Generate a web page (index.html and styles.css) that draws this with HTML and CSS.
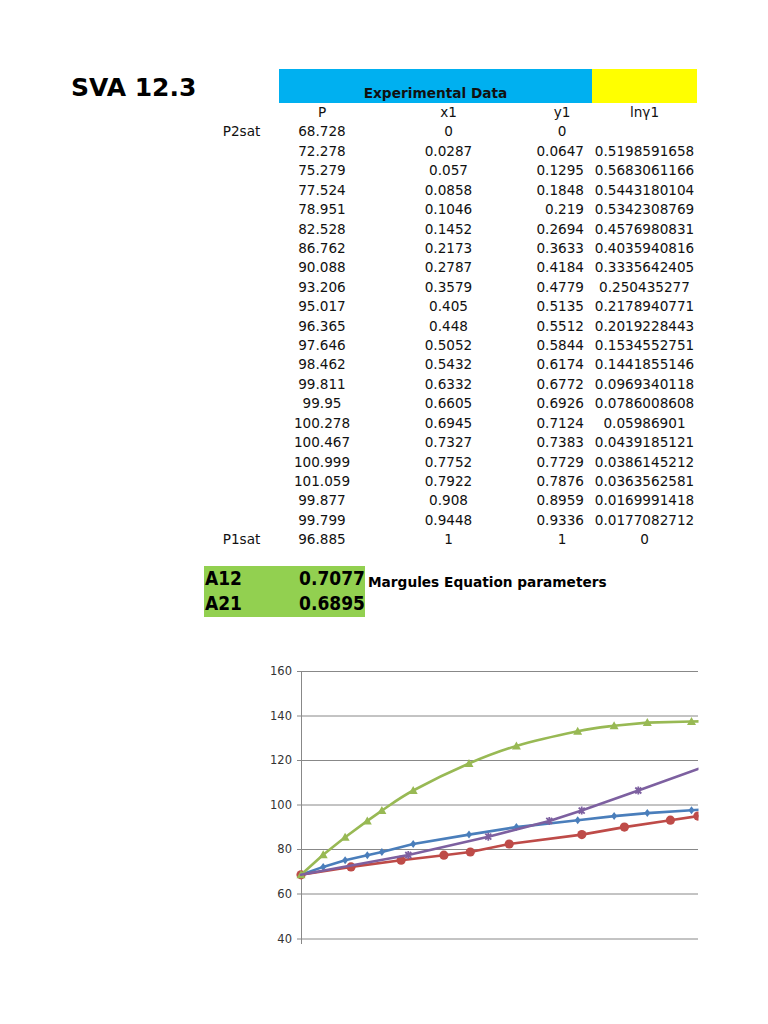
FILE: index.html
```html
<!DOCTYPE html>
<html>
<head>
<meta charset="utf-8">
<link rel="stylesheet" href="styles.css">
</head>
<body>
<div class="title-row">
  <div class="title">SVA 12.3</div>
  <div class="exp">Experimental Data</div>
  <div class="yel"></div>
</div>

<div class="table">
  <div class="row head"><span></span><span class="c">P</span><span class="c">x1</span><span class="c">y1</span><span class="c">lnγ1</span></div>
  <div class="row"><span class="c">P2sat</span><span class="c">68.728</span><span class="c">0</span><span class="c">0</span><span class="c"></span></div>
  <div class="row"><span></span><span class="c">72.278</span><span class="c">0.0287</span><span class="r">0.0647</span><span class="c">0.5198591658</span></div>
  <div class="row"><span></span><span class="c">75.279</span><span class="c">0.057</span><span class="r">0.1295</span><span class="c">0.5683061166</span></div>
  <div class="row"><span></span><span class="c">77.524</span><span class="c">0.0858</span><span class="r">0.1848</span><span class="c">0.5443180104</span></div>
  <div class="row"><span></span><span class="c">78.951</span><span class="c">0.1046</span><span class="r">0.219</span><span class="c">0.5342308769</span></div>
  <div class="row"><span></span><span class="c">82.528</span><span class="c">0.1452</span><span class="r">0.2694</span><span class="c">0.4576980831</span></div>
  <div class="row"><span></span><span class="c">86.762</span><span class="c">0.2173</span><span class="r">0.3633</span><span class="c">0.4035940816</span></div>
  <div class="row"><span></span><span class="c">90.088</span><span class="c">0.2787</span><span class="r">0.4184</span><span class="c">0.3335642405</span></div>
  <div class="row"><span></span><span class="c">93.206</span><span class="c">0.3579</span><span class="r">0.4779</span><span class="c">0.250435277</span></div>
  <div class="row"><span></span><span class="c">95.017</span><span class="c">0.405</span><span class="r">0.5135</span><span class="c">0.2178940771</span></div>
  <div class="row"><span></span><span class="c">96.365</span><span class="c">0.448</span><span class="r">0.5512</span><span class="c">0.2019228443</span></div>
  <div class="row"><span></span><span class="c">97.646</span><span class="c">0.5052</span><span class="r">0.5844</span><span class="c">0.1534552751</span></div>
  <div class="row"><span></span><span class="c">98.462</span><span class="c">0.5432</span><span class="r">0.6174</span><span class="c">0.1441855146</span></div>
  <div class="row"><span></span><span class="c">99.811</span><span class="c">0.6332</span><span class="r">0.6772</span><span class="c">0.0969340118</span></div>
  <div class="row"><span></span><span class="c">99.95</span><span class="c">0.6605</span><span class="r">0.6926</span><span class="c">0.0786008608</span></div>
  <div class="row"><span></span><span class="c">100.278</span><span class="c">0.6945</span><span class="r">0.7124</span><span class="c">0.05986901</span></div>
  <div class="row"><span></span><span class="c">100.467</span><span class="c">0.7327</span><span class="r">0.7383</span><span class="c">0.0439185121</span></div>
  <div class="row"><span></span><span class="c">100.999</span><span class="c">0.7752</span><span class="r">0.7729</span><span class="c">0.0386145212</span></div>
  <div class="row"><span></span><span class="c">101.059</span><span class="c">0.7922</span><span class="r">0.7876</span><span class="c">0.0363562581</span></div>
  <div class="row"><span></span><span class="c">99.877</span><span class="c">0.908</span><span class="r">0.8959</span><span class="c">0.0169991418</span></div>
  <div class="row"><span></span><span class="c">99.799</span><span class="c">0.9448</span><span class="r">0.9336</span><span class="c">0.0177082712</span></div>
  <div class="row"><span class="c">P1sat</span><span class="c">96.885</span><span class="c">1</span><span class="c">1</span><span class="c">0</span></div>
</div>

<div class="params">
  <div class="prow">
    <span class="pname">A12</span><span class="pval">0.7077</span><span class="pnote">Margules Equation parameters</span>
  </div>
  <div class="prow">
    <span class="pname">A21</span><span class="pval">0.6895</span><span></span>
  </div>
</div>

<svg class="chart" width="768" height="300" viewBox="0 655 768 300" xmlns="http://www.w3.org/2000/svg">
  <defs>
    <clipPath id="plot"><rect x="290" y="660" width="408.5" height="290"/></clipPath>
    <marker id="mBlue" markerUnits="userSpaceOnUse" markerWidth="10" markerHeight="10" refX="5" refY="5" overflow="visible">
      <path d="M5 1 L8 5 L5 9 L2 5 Z" fill="#4a7ebb"/>
    </marker>
    <marker id="mRed" markerUnits="userSpaceOnUse" markerWidth="12" markerHeight="12" refX="6" refY="6" overflow="visible">
      <circle cx="6" cy="6" r="4.6" fill="#be4b48"/>
    </marker>
    <marker id="mGreen" markerUnits="userSpaceOnUse" markerWidth="12" markerHeight="12" refX="6" refY="6" overflow="visible">
      <path d="M6 1.5 L10.5 9.5 L1.5 9.5 Z" fill="#98b954"/>
    </marker>
    <marker id="mPurple" markerUnits="userSpaceOnUse" markerWidth="12" markerHeight="12" refX="6" refY="6" overflow="visible">
      <path d="M3 3 L9 9 M9 3 L3 9 M6 2 L6 10" stroke="#7d60a0" stroke-width="1.8"/>
    </marker>
  </defs>

  <g class="grid">
    <line x1="297" y1="671.5" x2="698" y2="671.5"/>
    <line x1="297" y1="716" x2="698" y2="716"/>
    <line x1="297" y1="760.5" x2="698" y2="760.5"/>
    <line x1="297" y1="805" x2="698" y2="805"/>
    <line x1="297" y1="849.5" x2="698" y2="849.5"/>
    <line x1="297" y1="894" x2="698" y2="894"/>
    <line x1="297" y1="939" x2="698" y2="939"/>
    <line x1="301.5" y1="671" x2="301.5" y2="944"/>
  </g>

  <g class="ylabels">
    <text x="292" y="671">160</text>
    <text x="292" y="716">140</text>
    <text x="292" y="760">120</text>
    <text x="292" y="805">100</text>
    <text x="292" y="849">80</text>
    <text x="292" y="894">60</text>
    <text x="292" y="939">40</text>
  </g>

  <g clip-path="url(#plot)" fill="none" stroke-width="2.6" stroke-linejoin="round" stroke-linecap="round">
    <path stroke="#4a7ebb" marker-start="url(#mBlue)" marker-mid="url(#mBlue)" marker-end="url(#mBlue)"
      d="M301 874.8 L323.2 866.9 L345.1 860.2 L367.3 855.2 L381.9 852 L413.2 844 L469 834.6 L516.4 827.1 L577.7 820.2 L614.1 816.1 L647.3 813.1 L691.5 810.3 L720.9 808.4"/>
    <path stroke="#be4b48" marker-start="url(#mRed)" marker-mid="url(#mRed)" marker-end="url(#mRed)"
      d="M301 874.8 L351 866.9 L401.1 860.2 L443.9 855.2 L470.3 852 L509.2 844 L581.8 834.6 L624.4 827.1 L670.4 820.2 L697.9 816.1 L727.1 813.1"/>
    <path stroke="#98b954" marker-start="url(#mGreen)" marker-mid="url(#mGreen)" marker-end="url(#mGreen)"
      d="M301 874.8 L323.2 854.8 L345.1 837.2 L367.3 820.9 L381.9 810.6 C389.55 805.53 398.68 798.35 413.2 790.5 C427.72 782.65 451.8 770.92 469 763.5 C486.2 756.08 498.28 751.37 516.4 746 C534.52 740.63 561.42 734.68 577.7 731.3 C593.98 727.92 602.5 727.15 614.1 725.7 L647.3 722.6 L691.5 721.5 L720.9 721"/>
    <path stroke="#7d60a0" marker-mid="url(#mPurple)" marker-end="url(#mPurple)"
      d="M301 874.8 L408.3 855 L488.3 836.7 L549.3 820.9 L581.7 810.6 L638.3 790.5 L713 763.5"/>
  </g>
</svg>
</body>
</html>
```

FILE: styles.css
```css
body {
  margin: 0;
  font-family: "DejaVu Sans", "Liberation Sans", sans-serif;
  color: #111;
  background: #fff;
}

.title-row {
  display: grid;
  grid-template-columns: 208px 313px 105px;
  margin: 69px 0 0 71px;
  height: 34px;
}

.title {
  font-size: 25px;
  font-weight: bold;
  line-height: 25px;
  align-self: end;
  padding-bottom: 3px;
  color: #000;
}

.exp {
  background: #00b0f0;
  font-size: 13.7px;
  font-weight: bold;
  line-height: 16px;
  display: flex;
  align-items: flex-end;
  justify-content: center;
  padding-bottom: 2px;
  box-sizing: border-box;
}

.yel {
  background: #ffff00;
}

.table {
  margin-left: 204px;
  font-size: 13.6px;
}

.row {
  display: grid;
  grid-template-columns: 75px 86px 167px 60px 105px;
  height: 19.43px;
  line-height: 19.43px;
  white-space: nowrap;
}

.row .c {
  text-align: center;
}

.row .r {
  text-align: right;
  padding-right: 8px;
}

.params {
  margin: 16px 0 0 204px;
}

.prow {
  display: grid;
  grid-template-columns: 75px 86px auto;
  height: 25.5px;
}

.pname,
.pval {
  background: #92d050;
  font-family: "DejaVu Sans Condensed", "DejaVu Sans", sans-serif;
  font-stretch: condensed;
  font-weight: bold;
  font-size: 19px;
  line-height: 25.5px;
  color: #000;
}

.pname {
  padding-left: 1px;
}

.pval {
  text-align: right;
}

.pnote {
  font-size: 13.7px;
  font-weight: bold;
  line-height: 16px;
  align-self: end;
  padding: 0 0 1px 3px;
  white-space: nowrap;
  color: #000;
}

.chart {
  display: block;
  margin-top: 38px;
}

.grid line {
  stroke: #888;
  stroke-width: 1;
}

.ylabels text {
  font-family: "DejaVu Sans", sans-serif;
  font-size: 11.5px;
  fill: #333;
  text-anchor: end;
  dominant-baseline: central;
}
```
